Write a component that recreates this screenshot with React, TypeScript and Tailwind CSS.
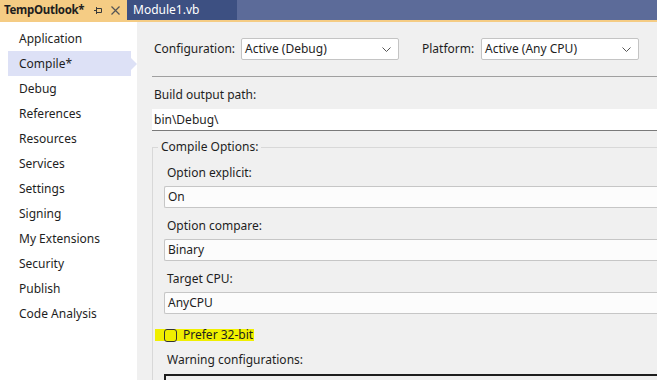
import React from "react";

const Chevron = () => (
  <svg width="9" height="5" viewBox="0 0 9 5" className="shrink-0">
    <path d="M0.5 0.5 L4.5 4.5 L8.5 0.5" fill="none" stroke="#555" strokeWidth="1" />
  </svg>
);

const Dropdown = ({ text, w }: { text: string; w: string }) => (
  <div className={`${w} h-[22px] bg-white border border-[#c4c4c4] rounded-[2px] flex items-center pl-[3px] pr-[7px] justify-between shrink-0`}>
    <span>{text}</span>
    <Chevron />
  </div>
);

const Field = ({ label, value }: { label: string; value: string }) => (
  <>
    <div className="mt-[10px] h-[16px] leading-[16px] pl-[3px]">{label}</div>
    <div className="mt-[5px] h-[22px] bg-[#fcfcfc] border-y border-l border-[#c6c6c6] rounded-l-[2px] flex items-center pl-[3px]">
      {value}
    </div>
  </>
);

export default function App() {
  const items = [
    "Application",
    "Compile*",
    "Debug",
    "References",
    "Resources",
    "Services",
    "Settings",
    "Signing",
    "My Extensions",
    "Security",
    "Publish",
    "Code Analysis",
  ];
  return (
    <div className="w-[657px] h-[380px] overflow-hidden flex flex-col text-[12px] text-[#1e1e1e] font-['Noto_Sans',sans-serif] bg-[#f0f0f0]">
      {/* Tab bar */}
      <div className="h-[20px] flex bg-[#5c6b99] shrink-0">
        <div className="w-[127px] bg-[#f5cc84] flex items-center pl-[4px] pr-[7px]">
          <span className="font-bold text-[11.5px] tracking-[-0.3px]">TempOutlook*</span>
          <svg width="8" height="9" viewBox="0 0 8 9" className="ml-auto">
            <path d="M0 4.5 H2.5 M2.5 1 V8 M2.5 2.5 H7.5 V6.5 H2.5" fill="none" stroke="#3a3a3a" strokeWidth="1" />
          </svg>
          <svg width="9" height="9" viewBox="0 0 9 9" className="ml-[9px]">
            <path d="M0.5 0.5 L8.5 8.5 M8.5 0.5 L0.5 8.5" stroke="#555" strokeWidth="1.2" />
          </svg>
        </div>
        <div className="w-[110px] bg-[#3d5082] flex items-center pl-[6px] text-white">Module1.vb</div>
      </div>
      <div className="h-[2px] bg-[#f5cc84] shrink-0" />
      <div className="flex flex-1 min-h-0">
        {/* Sidebar */}
        <div className="w-[137px] bg-white pt-[4px] shrink-0">
          {items.map((it) =>
            it === "Compile*" ? (
              <div key={it} className="relative h-[25px] flex items-center">
                <div className="absolute left-[8px] top-0 w-[123px] h-[25px] bg-[#dde1f6]" />
                <div className="absolute left-[131px] top-[7px] w-0 h-0 border-y-[6px] border-y-transparent border-l-[6px] border-l-[#dde1f6]" />
                <span className="relative pl-[19px]">{it}</span>
              </div>
            ) : (
              <div key={it} className="h-[25px] flex items-center pl-[19px]">
                {it}
              </div>
            )
          )}
        </div>
        {/* Main */}
        <div className="flex-1 min-w-0 pl-[15px] pt-[16px]">
          <div className="flex items-center h-[22px]">
            <div className="w-[89px] pl-[2px] shrink-0">Configuration:</div>
            <Dropdown text="Active (Debug)" w="w-[158px]" />
            <div className="ml-[23px] w-[59px] shrink-0">Platform:</div>
            <Dropdown text="Active (Any CPU)" w="w-[158px]" />
          </div>
          <div className="mt-[16px] h-px bg-[#a0a0a0]" />
          <div className="mt-[10px] h-[16px] leading-[16px] pl-[2px]">Build output path:</div>
          <div className="mt-[6px] h-[22px] bg-white border-b border-[#7a7a7a] flex items-center pl-[2px]">bin\Debug\</div>
          <div className="mt-[16px] relative border-l border-t border-[#d8d8d8] pl-[11px] h-[300px]">
            <div className="absolute left-[5px] top-[-9px] px-[3px] h-[16px] leading-[16px] bg-[#f0f0f0]">Compile Options:</div>
            <div className="h-[7px]" />
            <Field label="Option explicit:" value="On" />
            <Field label="Option compare:" value="Binary" />
            <Field label="Target CPU:" value="AnyCPU" />
            <div className="mt-[15px] ml-[-9px] w-[99px] h-[12px] bg-[#f0ef00] flex items-center">
              <div className="ml-[9px] w-[13px] h-[13px] shrink-0 rounded-[3px] border border-[#333]" />
              <span className="ml-[6px] leading-[12px]">Prefer 32-bit</span>
            </div>
            <div className="mt-[11px] h-[16px] leading-[16px] pl-[3px]">Warning configurations:</div>
            <div className="mt-[6px] h-[20px] border-l-2 border-t-2 border-[#1e1e1e]" />
          </div>
        </div>
      </div>
    </div>
  );
}
